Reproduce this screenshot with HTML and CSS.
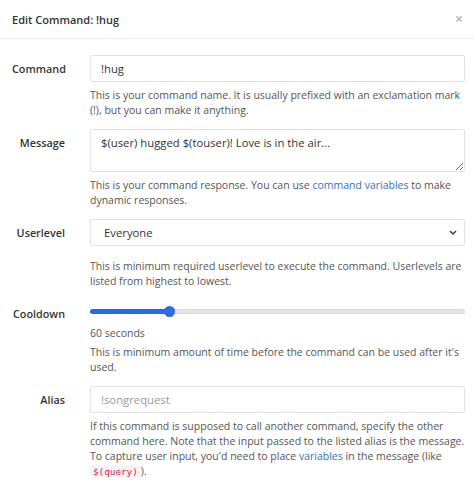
FILE: index.html
```html
<!DOCTYPE html>
<html>
<head>
<meta charset="utf-8">
<link rel="stylesheet" href="styles.css">
</head>
<body>
<div class="modal">
  <div class="modal-header">
    <h4 class="modal-title">Edit Command: !hug</h4>
    <span class="close">&times;</span>
  </div>
  <div class="modal-body">
    <div class="row">
      <label class="label">Command</label>
      <div class="field">
        <input class="input" type="text" value="!hug">
        <p class="help">This is your command name. It is usually prefixed with an exclamation mark (!), but you can make it anything.</p>
      </div>
    </div>
    <div class="row">
      <label class="label">Message</label>
      <div class="field">
        <textarea class="input textarea">$(user) hugged $(touser)! Love is in the air...</textarea>
        <p class="help">This is your command response. You can use <a href="#">command variables</a> to make dynamic responses.</p>
      </div>
    </div>
    <div class="row">
      <label class="label">Userlevel</label>
      <div class="field">
        <div class="select-wrap">
          <select class="input select"><option>Everyone</option></select>
          <svg class="chevron" width="8" height="5" viewBox="0 0 8 5"><path d="M1 1l3 3 3-3" fill="none" stroke="#444" stroke-width="1.5"/></svg>
        </div>
        <p class="help help-spaced">This is minimum required userlevel to execute the command. Userlevels are listed from highest to lowest.</p>
      </div>
    </div>
    <div class="row">
      <label class="label">Cooldown</label>
      <div class="field">
        <div class="slider-line">
          <input class="range" type="range" min="0" max="295" value="60">
        </div>
        <p class="value">60 seconds</p>
        <p class="help help-tight">This is minimum amount of time before the command can be used after it's used.</p>
      </div>
    </div>
    <div class="row">
      <label class="label">Alias</label>
      <div class="field">
        <input class="input" type="text" placeholder="!songrequest">
        <p class="help">If this command is supposed to call another command, specify the other command here. Note that the input passed to the listed alias is the message. To capture user input, you'd need to place <a href="#">variables</a> in the message (like <code>$(query)</code>).</p>
      </div>
    </div>
  </div>
</div>
</body>
</html>
```
FILE: styles.css
```css
* { box-sizing: border-box; }
html, body { margin: 0; padding: 0; background: #fff; }
body {
  font-family: "Open Sans", "Liberation Sans", sans-serif;
  color: #333;
  font-size: 10.5px;
}
.modal { width: 474px; }
.modal-header {
  height: 39px;
  border-bottom: 1px solid #ebebeb;
  display: flex;
  align-items: center;
  justify-content: space-between;
  padding: 0 11px 0 12px;
}
.modal-title {
  margin: 0;
  font-size: 11px;
  font-weight: 600;
  color: #333;
}
.close {
  color: #bdbdbd;
  font-size: 14px;
  font-weight: 700;
  line-height: 1;
}
.modal-body {
  padding: 16px 9px 20px 12px;
}
.row {
  display: grid;
  grid-template-columns: 53px 1fr;
  column-gap: 25px;
  margin-bottom: 11px;
}
.label {
  text-align: right;
  font-weight: 600;
  font-size: 10.8px;
  line-height: 27px;
  color: #333;
  white-space: nowrap;
}
.field { min-width: 0; }
.input {
  display: block;
  width: 100%;
  height: 27px;
  border: 1px solid #e2e2e2;
  border-radius: 2px;
  padding: 0 10px;
  font-family: "Open Sans", "Liberation Sans", sans-serif;
  font-size: 11.3px;
  color: #333;
  background: #fff;
  outline: none;
}
.input::placeholder { color: #999; }
.textarea {
  height: 43px;
  padding: 4px 10px;
  line-height: 18px;
  resize: vertical;
}
.select-wrap { position: relative; }
.select {
  -webkit-appearance: none;
  appearance: none;
  padding-left: 13px;
}
.chevron {
  position: absolute;
  right: 8px;
  top: 11px;
}
.help {
  margin: 6px 0 0;
  line-height: 15px;
  font-size: 10.5px;
  color: #555;
}
.help-spaced { margin-top: 13px; }
.help-tight { margin-top: 4px; }
.help a { color: #3671b4; text-decoration: none; }
code {
  font-family: "DejaVu Sans Mono", "Liberation Mono", monospace;
  font-size: 9.3px;
  color: #c7254e;
  background: #f9f2f4;
  padding: 0 3px;
  border-radius: 3px;
}
.slider-line {
  height: 23px;
  display: flex;
  align-items: center;
}
.range {
  -webkit-appearance: none;
  appearance: none;
  width: 100%;
  height: 5px;
  margin: 0;
  border-radius: 3px;
  background: linear-gradient(to right, #2d6be0 0, #2d6be0 21%, #e4e4e4 21%, #e4e4e4 100%);
  box-shadow: inset 0 0 0 1px rgba(0,0,0,0.04);
  outline: none;
}
.range::-webkit-slider-thumb {
  -webkit-appearance: none;
  width: 11px;
  height: 11px;
  border-radius: 50%;
  background: #2d6be0;
  border: none;
}
.value {
  margin: 3px 0 0;
  line-height: 15px;
  color: #555;
}
```
